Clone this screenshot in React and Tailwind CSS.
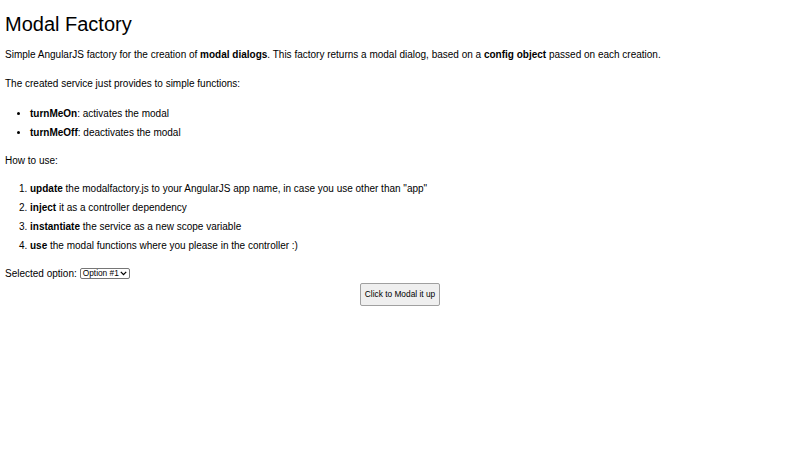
export default function App() {
  const font = { fontFamily: '"Liberation Sans", Arial, sans-serif' };
  return (
    <div className="w-[800px] h-[450px] bg-white text-black px-[5px] text-[10px] leading-[19px]" style={font}>
      <h1 className="pt-[13px] text-[20px] leading-[23px] font-normal">Modal Factory</h1>
      <p className="mt-[9px]">
        Simple AngularJS factory for the creation of <b>modal dialogs</b>. This factory returns a modal dialog, based on a <b>config object</b> passed on each creation.
      </p>
      <p className="mt-[10px]">The created service just provides to simple functions:</p>
      <ul className="mt-[11px] pl-[25px] list-disc">
        <li><b>turnMeOn</b>: activates the modal</li>
        <li><b>turnMeOff</b>: deactivates the modal</li>
      </ul>
      <p className="mt-[9px]">How to use:</p>
      <ol className="mt-[9px] pl-[25px] list-decimal">
        <li><b>update</b> the modalfactory.js to your AngularJS app name, in case you use other than "app"</li>
        <li><b>inject</b> it as a controller dependency</li>
        <li><b>instantiate</b> the service as a new scope variable</li>
        <li><b>use</b> the modal functions where you please in the controller :)</li>
      </ol>
      <div className="mt-[9px] flex items-center h-[19px]">
        <span>Selected option:</span>
        <span className="ml-[3px] flex items-center h-[11px] w-[50px] border border-[#767676] rounded-[2px] bg-white text-[8.33px] leading-none pl-[2px] pr-[1px]">
          <span className="flex-1">Option #1</span>
          <svg width="7" height="5" viewBox="0 0 7 5" className="mr-[1px]">
            <path d="M0.8 0.9 L3.5 3.6 L6.2 0.9" fill="none" stroke="#000" strokeWidth="1.3" />
          </svg>
        </span>
      </div>
      <div className="flex justify-center mt-[0px]">
        <button className="w-[80px] h-[23px] border border-[#a0a0a0] rounded-[2px] bg-[#efefef] text-[8.33px] leading-none text-black">
          Click to Modal it up
        </button>
      </div>
    </div>
  );
}
